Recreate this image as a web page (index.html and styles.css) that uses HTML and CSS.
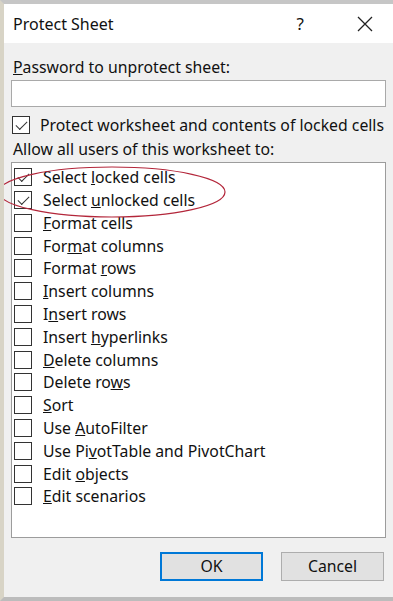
FILE: index.html
```html
<!DOCTYPE html>
<html lang="en">
<head>
    <meta charset="UTF-8">
    <meta name="viewport" content="width=device-width, initial-scale=1.0">
    <title>Protect Sheet</title>
    <link rel="stylesheet" href="styles.css">
</head>
<body>
    <div class="window">
        <!-- Barra de título -->
        <div class="title-bar">
            <span class="title">Protect Sheet</span>
            <span class="help">?</span>
            <svg class="close" width="16" height="16" viewBox="0 0 16 16">
                <path d="M1 1 L15 15 M15 1 L1 15" stroke="#222" stroke-width="1.3" fill="none"/>
            </svg>
        </div>

        <div class="content">
            <div class="label"><u>P</u>assword to unprotect sheet:</div>
            <div class="input"></div>

            <div class="check-row top-check">
                <span class="box checked"></span>
                <span>Protect worksheet and contents of locked cells</span>
            </div>

            <div class="label allow">Allow all users of this worksheet to:</div>

            <div class="list">
                <div class="check-row"><span class="box checked"></span><span>Select <u>l</u>ocked cells</span></div>
                <div class="check-row"><span class="box checked"></span><span>Select <u>u</u>nlocked cells</span></div>
                <div class="check-row"><span class="box"></span><span><u>F</u>ormat cells</span></div>
                <div class="check-row"><span class="box"></span><span>For<u>m</u>at columns</span></div>
                <div class="check-row"><span class="box"></span><span>Format <u>r</u>ows</span></div>
                <div class="check-row"><span class="box"></span><span><u>I</u>nsert columns</span></div>
                <div class="check-row"><span class="box"></span><span>I<u>n</u>sert rows</span></div>
                <div class="check-row"><span class="box"></span><span>Insert <u>h</u>yperlinks</span></div>
                <div class="check-row"><span class="box"></span><span><u>D</u>elete columns</span></div>
                <div class="check-row"><span class="box"></span><span>Delete ro<u>w</u>s</span></div>
                <div class="check-row"><span class="box"></span><span><u>S</u>ort</span></div>
                <div class="check-row"><span class="box"></span><span>Use <u>A</u>utoFilter</span></div>
                <div class="check-row"><span class="box"></span><span>Use Pi<u>v</u>otTable and PivotChart</span></div>
                <div class="check-row"><span class="box"></span><span>Edit <u>o</u>bjects</span></div>
                <div class="check-row"><span class="box"></span><span><u>E</u>dit scenarios</span></div>
            </div>

            <div class="buttons">
                <button class="btn default">OK</button>
                <button class="btn">Cancel</button>
            </div>
        </div>

        <!-- Marca roja alrededor de las dos primeras opciones -->
        <svg class="ring" width="240" height="60" viewBox="0 0 240 60">
            <ellipse cx="112" cy="29" rx="113" ry="25" fill="none" stroke="#b3263a" stroke-width="1.2"/>
        </svg>
    </div>
</body>
</html>
```

FILE: styles.css
```css
html, body {
    margin: 0;
    padding: 0;
}
body {
    font-family: "Noto Sans", "Open Sans", sans-serif;
    font-size: 15.8px;
    color: #111;
    background: #c4c4c4;
}
.window {
    position: relative;
    width: 389px;
    height: 593px;
    border-left: 4px solid #d8d4c6;
    border-top: 4px solid #c6c6c6;
    border-bottom: 4px solid #bcbcbc;
    background: #f0f0f0;
    display: flex;
    flex-direction: column;
    overflow: hidden;
}
.title-bar {
    height: 39px;
    background: #fff;
    display: flex;
    align-items: center;
    padding-left: 9px;
}
.title {
    font-size: 16px;
    flex: 1;
}
.help {
    font-size: 17px;
    margin-right: 53px;
}
.close {
    margin-right: 20px;
}
.content {
    padding: 0 7px;
    display: flex;
    flex-direction: column;
}
.label {
    line-height: 20px;
    margin-top: 14px;
    padding-left: 2px;
}
.input {
    margin-top: 3px;
    height: 25px;
    background: #fff;
    border: 1px solid #a9a9a9;
}
.check-row {
    display: flex;
    align-items: center;
    gap: 10px;
    height: 22.8px;
    white-space: nowrap;
}
.top-check {
    margin-top: 7px;
    padding-left: 1px;
}
.allow {
    margin-top: 2px;
}
.box {
    width: 16px;
    height: 16px;
    border: 1px solid #333;
    background: #fff;
    flex: none;
    position: relative;
}
.box.checked::after {
    content: "";
    position: absolute;
    left: 3px;
    top: 1px;
    width: 10px;
    height: 5px;
    border-left: 1.4px solid #333;
    border-bottom: 1.4px solid #333;
    transform: translate(0, 3px) rotate(-45deg);
}
.list {
    margin-top: 3px;
    height: 371px;
    background: #fff;
    border: 1px solid #9c9c9c;
    padding: 3px 2px 0;
}
.list .check-row {
    gap: 11px;
}
.buttons {
    display: flex;
    justify-content: flex-end;
    gap: 18px;
    margin-top: 14px;
    padding-right: 2px;
}
.btn {
    width: 103px;
    height: 29px;
    font-family: inherit;
    font-size: 15.8px;
    color: #111;
    background: #e1e1e1;
    border: 1px solid #adadad;
    padding: 0;
}
.btn.default {
    border: 2px solid #0078d7;
}
.ring {
    position: absolute;
    left: -4px;
    top: 159px;
}
```
